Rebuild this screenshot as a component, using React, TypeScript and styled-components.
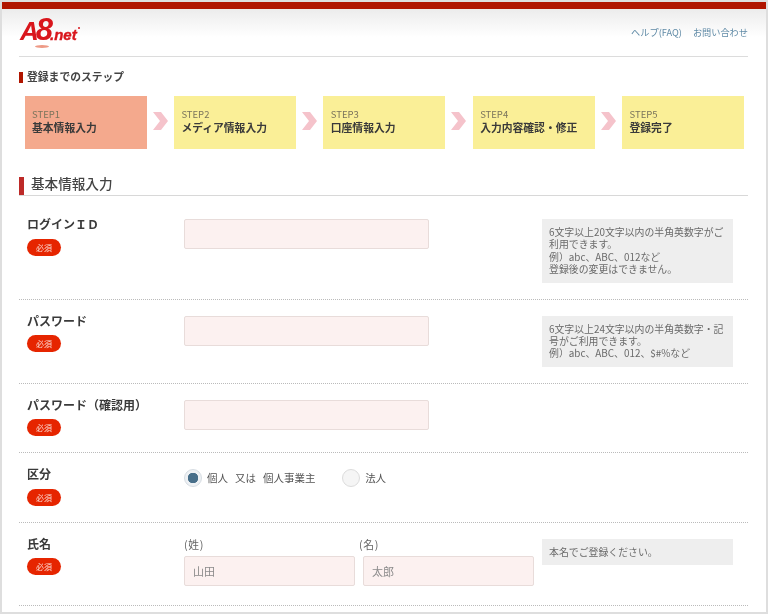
import React from 'react';
import styled, { createGlobalStyle } from 'styled-components';

const GlobalStyle = createGlobalStyle`
  html, body {
    margin: 0;
    padding: 0;
    background: #fff;
  }
  * {
    box-sizing: border-box;
  }
`;

const Frame = styled.div`
  width: 768px;
  height: 614px;
  overflow: hidden;
  border: 2px solid #dedede;
  background: #fff;
  color: #333;
  font-family: "Noto Sans CJK JP", "Noto Sans", sans-serif;
  filter: blur(0.45px);
`;

const TopBar = styled.div`
  height: 7px;
  background: #b01500;
`;

const HeaderBand = styled.div`
  padding: 0 18px 0 17px;
  background: linear-gradient(#ececec 0, #fff 28px);
`;

const Header = styled.header`
  display: flex;
  justify-content: space-between;
  align-items: center;
  height: 48px;
  border-bottom: 1px solid #dcdcdc;
`;

const Logo = styled.div`
  position: relative;
  display: flex;
  align-items: baseline;
  margin: -5px 0 0 1px;
  color: #d9161c;
  font-family: "Liberation Sans", sans-serif;
  font-style: italic;
  font-weight: 700;
`;

const LogoA = styled.span`
  font-size: 26px;
  line-height: 30px;
`;

const LogoEight = styled.span`
  margin-left: -3px;
  font-size: 31px;
  line-height: 30px;
  letter-spacing: -2px;
`;

const LogoNet = styled.span`
  margin-left: -1px;
  font-size: 15px;
  -webkit-text-stroke: 0.4px #d9161c;
`;

const LogoDot = styled.span`
  position: absolute;
  top: 12px;
  right: -3px;
  width: 2px;
  height: 2px;
  border-radius: 50%;
  background: #d9161c;
`;

const LogoSwoosh = styled.span`
  position: absolute;
  left: 15px;
  bottom: -2px;
  width: 14px;
  height: 3px;
  border-radius: 50%;
  background: #ee9a86;
`;

const HeaderLinks = styled.nav`
  display: flex;
  gap: 11px;
  margin-top: -1px;
`;

const HeaderLink = styled.a`
  color: #5f8aa6;
  font-size: 9.2px;
  line-height: 12px;
  text-decoration: none;
`;

const Main = styled.main`
  padding: 0 18px 0 17px;
`;

const StepsTitle = styled.h2`
  display: flex;
  align-items: flex-start;
  gap: 4px;
  height: 11px;
  margin: 15px 0 0;
  font-size: 10.8px;
  font-weight: 700;
  line-height: 9px;
  color: #444;

  &::before {
    content: "";
    width: 4px;
    height: 11px;
    background: #b01500;
  }
`;

const StepList = styled.ol`
  display: flex;
  justify-content: space-between;
  align-items: center;
  width: 719.5px;
  margin: 13px 0 0 5.5px;
  padding: 0;
  list-style: none;
`;

const Step = styled.li<{ $active?: boolean }>`
  flex: 0 0 122px;
  height: 53px;
  padding: 13px 7.5px 0;
  background: ${(p) => (p.$active ? '#f4a98d' : '#faef97')};
`;

const StepNo = styled.div`
  font-size: 9.5px;
  line-height: 11px;
  color: #7a745c;
`;

const StepName = styled.div`
  font-size: 10.8px;
  font-weight: 700;
  line-height: 14px;
  color: #3a3a3a;
  white-space: nowrap;
`;

const StepArrow = styled.svg`
  flex: 0 0 15px;
  width: 15px;
  height: 18px;
  margin-top: -3px;
`;

const SectionTitle = styled.h1`
  display: flex;
  align-items: flex-start;
  gap: 7px;
  height: 19px;
  margin: 28px 0 0;
  border-bottom: 1px solid #d8d8d8;
  font-size: 13.6px;
  font-weight: 500;
  line-height: 13px;
  color: #444;

  &::before {
    content: "";
    width: 5px;
    height: 18px;
    background: #bd2a28;
  }
`;

const Form = styled.form`
  margin-top: 7px;
`;

const Row = styled.div<{ $tail?: number }>`
  display: grid;
  grid-template-columns: 157px 1fr;
  padding: 16px 0 ${(p) => p.$tail ?? 16}px 8px;
  border-bottom: 1px dotted #bbb;
`;

const LabelCell = styled.div`
  display: flex;
  flex-direction: column;
  align-items: flex-start;
  gap: 9.5px;
`;

const FieldLabel = styled.div`
  font-size: 12px;
  font-weight: 700;
  line-height: 10px;
  color: #3a3a3a;
  white-space: nowrap;
`;

const Required = styled.span`
  display: flex;
  align-items: center;
  justify-content: center;
  width: 34px;
  height: 17px;
  border-radius: 9px;
  background: #e62500;
  color: #fbd9d0;
  font-size: 8px;
  line-height: 17px;
`;

const Content = styled.div`
  display: flex;
  align-items: flex-start;
  justify-content: space-between;
  padding-right: 15px;
`;

const TextField = styled.input<{ $wide?: boolean }>`
  display: block;
  width: ${(p) => (p.$wide ? '245px' : '171px')};
  height: 30px;
  padding: 0 8px;
  border: 1px solid #e8dcda;
  border-radius: 2px;
  background: #fcf1f0;
  font-family: inherit;
  font-size: 11px;
  outline: none;

  &::placeholder {
    color: #8a8a8a;
    opacity: 1;
  }
`;

const Note = styled.p`
  width: 191px;
  margin: 0;
  padding: 7px;
  background: #eee;
  color: #6a6a6a;
  font-size: 9.9px;
  line-height: 12.4px;
`;

const RadioGroup = styled.div`
  display: flex;
  align-items: center;
  gap: 26.5px;
`;

const RadioLabel = styled.label`
  display: flex;
  align-items: center;
  gap: 5px;
  color: #555;
  font-size: 10.5px;
  line-height: 18px;
  white-space: pre;
`;

const RadioInput = styled.input`
  appearance: none;
  flex: none;
  width: 18px;
  height: 18px;
  margin: 0;
  border: 1px solid #dcdcdc;
  border-radius: 50%;
  background: #f5f5f5;

  &:checked {
    background: radial-gradient(circle, #486f8a 0 5px, #eef1f4 5.5px);
    border-color: #d6dce2;
  }
`;

const NameFields = styled.div`
  display: flex;
  gap: 8px;
`;

const NameField = styled.label`
  display: flex;
  flex-direction: column;
  gap: 7px;
`;

const NameCaption = styled.span<{ $pull?: boolean }>`
  margin-left: ${(p) => (p.$pull ? '-4px' : '0')};
  color: #666;
  font-size: 10.8px;
  line-height: 10px;
  letter-spacing: 0.6px;
`;

const steps = [
  { no: 'STEP1', name: '基本情報入力' },
  { no: 'STEP2', name: 'メディア情報入力' },
  { no: 'STEP3', name: '口座情報入力' },
  { no: 'STEP4', name: '入力内容確認・修正' },
  { no: 'STEP5', name: '登録完了' },
];

const Arrow = () => (
  <StepArrow viewBox="0 0 15 18">
    <path d="M0 0h8l7 9-7 9H0l7-9z" fill="#f5c3cb" />
  </StepArrow>
);

const App: React.FC = () => {
  return (
    <Frame>
      <GlobalStyle />
      <TopBar />
      <HeaderBand>
        <Header>
          <Logo>
            <LogoA>A</LogoA>
            <LogoEight>8</LogoEight>
            <LogoNet>.net</LogoNet>
            <LogoDot />
            <LogoSwoosh />
          </Logo>
          <HeaderLinks>
            <HeaderLink href="#">ヘルプ(FAQ)</HeaderLink>
            <HeaderLink href="#">お問い合わせ</HeaderLink>
          </HeaderLinks>
        </Header>
      </HeaderBand>
      <Main>
        <StepsTitle>登録までのステップ</StepsTitle>
        <StepList>
          {steps.map((s, i) => (
            <React.Fragment key={s.no}>
              {i > 0 && <Arrow />}
              <Step $active={i === 0}>
                <StepNo>{s.no}</StepNo>
                <StepName>{s.name}</StepName>
              </Step>
            </React.Fragment>
          ))}
        </StepList>
        <SectionTitle>基本情報入力</SectionTitle>
        <Form>
          <Row>
            <LabelCell>
              <FieldLabel>ログインＩＤ</FieldLabel>
              <Required>必須</Required>
            </LabelCell>
            <Content>
              <TextField $wide />
              <Note>
                6文字以上20文字以内の半角英数字がご利用できます。
                <br />
                例）abc、ABC、012など
                <br />
                登録後の変更はできません。
              </Note>
            </Content>
          </Row>
          <Row>
            <LabelCell>
              <FieldLabel>パスワード</FieldLabel>
              <Required>必須</Required>
            </LabelCell>
            <Content>
              <TextField $wide type="password" />
              <Note>
                6文字以上24文字以内の半角英数字・記号がご利用できます。
                <br />
                例）abc、ABC、012、$#%など
              </Note>
            </Content>
          </Row>
          <Row>
            <LabelCell>
              <FieldLabel>パスワード（確認用）</FieldLabel>
              <Required>必須</Required>
            </LabelCell>
            <Content>
              <TextField $wide type="password" />
            </Content>
          </Row>
          <Row>
            <LabelCell>
              <FieldLabel>区分</FieldLabel>
              <Required>必須</Required>
            </LabelCell>
            <Content>
              <RadioGroup>
                <RadioLabel>
                  <RadioInput type="radio" name="kind" defaultChecked />
                  {'個人   又は   個人事業主'}
                </RadioLabel>
                <RadioLabel>
                  <RadioInput type="radio" name="kind" />
                  法人
                </RadioLabel>
              </RadioGroup>
            </Content>
          </Row>
          <Row $tail={19}>
            <LabelCell>
              <FieldLabel>氏名</FieldLabel>
              <Required>必須</Required>
            </LabelCell>
            <Content>
              <NameFields>
                <NameField>
                  <NameCaption>(姓)</NameCaption>
                  <TextField placeholder="山田" />
                </NameField>
                <NameField>
                  <NameCaption $pull>(名)</NameCaption>
                  <TextField placeholder="太郎" />
                </NameField>
              </NameFields>
              <Note>本名でご登録ください。</Note>
            </Content>
          </Row>
        </Form>
      </Main>
    </Frame>
  );
};

export default App;
